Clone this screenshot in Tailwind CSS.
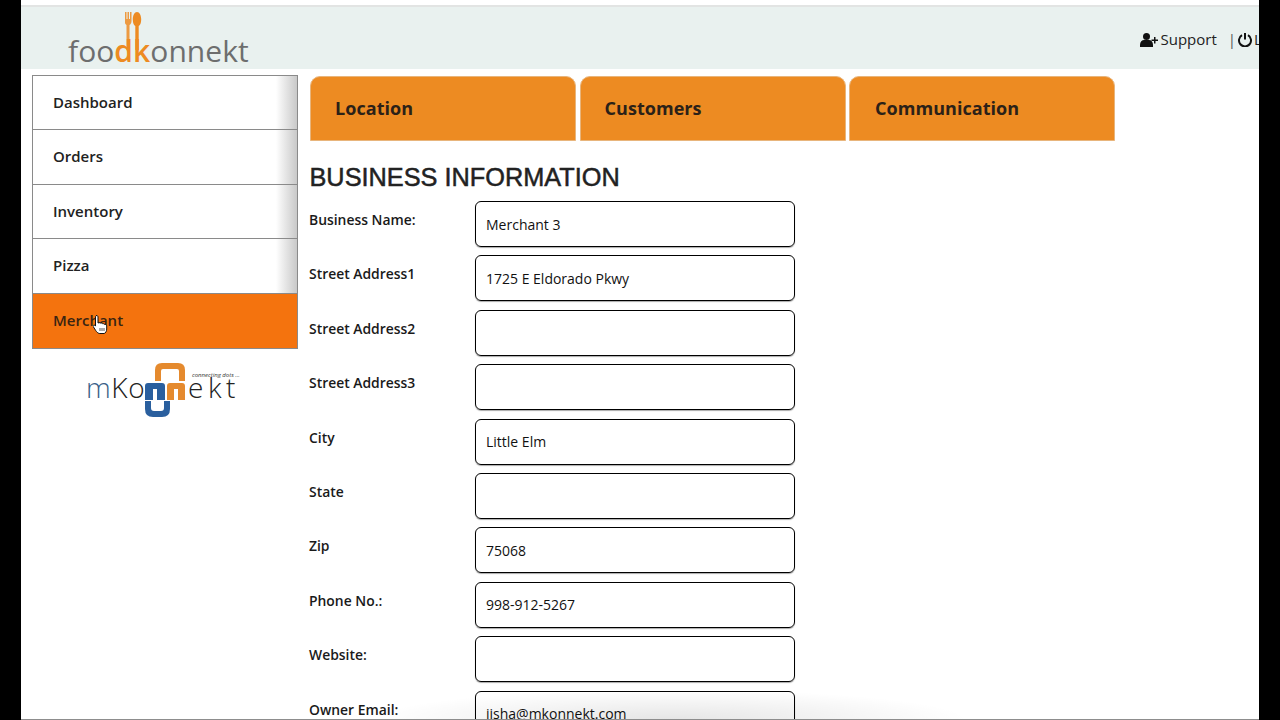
<!DOCTYPE html>
<html lang="en">
<head>
  <meta charset="UTF-8" />
  <title>foodkonnekt - Merchant</title>
  <script src="https://cdn.jsdelivr.net/npm/@tailwindcss/browser@4"></script>
</head>
<body class="bg-black font-['Open_Sans',sans-serif] text-[#111]">
<div class="relative ml-[21px] h-[720px] w-[1238px] overflow-hidden bg-white">

  <!-- header -->
  <div class="h-[7px] border-b-2 border-[#e2e4e3] bg-white"></div>
  <header class="flex h-[62px] items-start justify-between bg-[#e9f1ef]">
    <div class="relative ml-[46px] h-[62px] w-[190px]">
      <svg class="absolute left-[58px] top-[5px]" width="18" height="38" viewBox="0 0 18 38">
        <path d="M0 0h1.500v7h1v-7h1.500v7h1v-7h1.500v9c0 2-1 3.500-2 4v25h-3v-25c-1-.5-2-2-2-4z" fill="#ed8b22" opacity=".85"/>
        <path d="M12 0c2.500 0 4.200 3.500 4.200 7.500 0 3.500-1.200 6-2.500 6.500v24h-3.400v-24c-1.300-.5-2.500-3-2.500-6.500 0-4 1.700-7.500 4.200-7.500z" fill="#ed8b22"/>
      </svg>
      <div class="absolute left-[1px] top-[24px] text-[30px] leading-[40px] tracking-[.05px] text-[#6d6e6e]">foo<span class="font-semibold text-[#ed8b22]">dk</span>onnekt</div>
    </div>
    <div class="flex items-center pt-[22px] text-[15px] leading-[20px] text-[#222]">
      <svg class="mr-[2px] mt-[1px]" width="18" height="14" viewBox="0 0 18 14" fill="#111">
        <circle cx="6.500" cy="3.500" r="3.500"/>
        <path d="M0 14v-2.500c0-2.500 2-4.500 4-4.500h5c2 0 4 2 4 4.500v2.500z"/>
        <path d="M14 4h1.500v2.500h2.500v1.500h-2.500v2.500h-1.500v-2.500h-2.500v-1.500h2.500z"/>
      </svg>
      <span>Support</span>
      <span class="ml-[11px] text-[#555]">|</span>
      <svg class="ml-[2px] mr-[2px]" width="14" height="15" viewBox="0 0 14 15" fill="none" stroke="#111" stroke-width="2">
        <path d="M4 3.200a6 6 0 1 0 6 0"/>
        <path d="M7 1v6.500"/>
      </svg>
      <span class="w-[5px] overflow-hidden">Logout</span>
    </div>
  </header>

  <div class="flex items-start pl-[11px] pt-[6px]">
    <!-- sidebar -->
    <aside class="w-[266px] shrink-0">
      <nav class="flex flex-col border border-[#8a8a8a] bg-white text-[15px] font-semibold text-[#222]">
        <a class="flex h-[54px] items-center border-b border-[#8a8a8a] bg-gradient-to-r from-white from-[92%] to-[#c9c9c9] pb-[1px] pl-[20px]">Dashboard</a>
        <a class="flex h-[54.500px] items-center border-b border-[#8a8a8a] bg-gradient-to-r from-white from-[92%] to-[#c9c9c9] pb-[1px] pl-[20px]">Orders</a>
        <a class="flex h-[54.500px] items-center border-b border-[#8a8a8a] bg-gradient-to-r from-white from-[92%] to-[#c9c9c9] pb-[1px] pl-[20px]">Inventory</a>
        <a class="flex h-[54.500px] items-center border-b border-[#8a8a8a] bg-gradient-to-r from-white from-[92%] to-[#c9c9c9] pb-[1px] pl-[20px]">Pizza</a>
        <a class="relative flex h-[54px] items-center bg-[#f4730e] pb-[1px] pl-[20px] text-[#3a2412]">
          Merchant
          <svg class="absolute left-[60px] top-[20px]" width="16" height="20" viewBox="0 0 16 20">
            <path d="M3.500 1.500c1 0 1.500.7 1.500 1.500v6l1-.3c.8-.2 1.500 0 1.800.5.800-.3 1.600 0 1.900.6.800-.3 1.700 0 2 .7.900-.2 2 .4 2 1.500v3c0 2-1 4-2.500 4.500h-5c-1.500-.5-2.500-1.500-3.500-3l-2.500-4c-.5-1 1-2 1.800-1l.5.600v-9.100c0-.8.500-1.500 1.500-1.500z" fill="#fff" stroke="#111" stroke-width="1"/>
            <path d="M7 14v3M9 14v3M11 14v3" stroke="#555" stroke-width="1"/>
          </svg>
        </a>
      </nav>

      <!-- mkonnekt logo -->
      <div class="relative mt-[13px] h-[58px] w-[266px]">
        <svg class="absolute left-[113px] top-0" width="42" height="56" viewBox="0 0 42 56">
          <path d="M10 19v-11q0-7 7-7h16q7 0 7 7v11h-6v-10q0-2-2-2h-14q-2 0-2 2v10z" fill="#e58a2e"/>
          <path d="M0 38v-14q0-3 3-3h14q3 0 3 3v14h-8v-11h-4v11z" fill="#2a5f9e"/>
          <path d="M22 38v-14q0-3 3-3h12q3 0 3 3v14h-7v-11h-4v11z" fill="#e58a2e"/>
          <path d="M0 39h6v7q0 3 3 3h7q3 0 3-3v-7h6v8q0 8-8 8h-9q-8 0-8-8z" fill="#2a5f9e"/>
        </svg>
        <div class="absolute left-[54px] top-[5px] text-[28px] font-light leading-[40px] tracking-[.6px] text-[#222]"><span class="text-[#3a5f88]">m</span>Ko</div>
        <div class="absolute left-[156px] top-[5px] text-[28px] font-light leading-[40px] tracking-[4.500px] text-[#222]">ekt</div>
        <div class="absolute left-[160px] top-[9px] text-[6px] italic leading-[8px] text-[#333]">connecting dots ...</div>
      </div>
    </aside>

    <!-- main -->
    <main class="ml-[11px] w-[830px]">
      <div class="flex gap-[3.500px] pl-[1px] pt-[1px]">
        <div class="flex h-[65px] w-[266px] items-center rounded-t-[10px] border border-[#e8b57c] bg-[#ed8b22] pl-[24px] text-[18px] font-bold tracking-[.05px] text-[#2b2118]">Location</div>
        <div class="flex h-[65px] w-[266px] items-center rounded-t-[10px] border border-[#e8b57c] bg-[#ed8b22] pl-[24px] text-[18px] font-bold tracking-[.05px] text-[#2b2118]">Customers</div>
        <div class="flex h-[65px] w-[266px] items-center rounded-t-[10px] border border-[#e8b57c] bg-[#ed8b22] pl-[25px] text-[18px] font-bold tracking-[.05px] text-[#2b2118]">Communication</div>
      </div>

      <h1 class="mt-[20px] pl-[.5px] font-['Liberation_Sans',sans-serif] text-[25.300px] font-normal leading-[32px] text-[#222] [-webkit-text-stroke:0.5px_#222]">BUSINESS INFORMATION</h1>

      <form class="mt-[8px] flex flex-col gap-[8.400px] text-[14px]">
        <div class="flex h-[46px]"><label class="w-[166px] pt-[9px] text-[13.900px] font-semibold text-[#1a1a1a]">Business Name:</label><div class="flex h-[46px] w-[320px] items-center rounded-[6px] border border-black pl-[10px] shadow-[0_1px_1px_#aaa]">Merchant 3</div></div>
        <div class="flex h-[46px]"><label class="w-[166px] pt-[9px] text-[13.900px] font-semibold text-[#1a1a1a]">Street Address1</label><div class="flex h-[46px] w-[320px] items-center rounded-[6px] border border-black pl-[10px] shadow-[0_1px_1px_#aaa]">1725 E Eldorado Pkwy</div></div>
        <div class="flex h-[46px]"><label class="w-[166px] pt-[9px] text-[13.900px] font-semibold text-[#1a1a1a]">Street Address2</label><div class="flex h-[46px] w-[320px] items-center rounded-[6px] border border-black pl-[10px] shadow-[0_1px_1px_#aaa]"></div></div>
        <div class="flex h-[46px]"><label class="w-[166px] pt-[9px] text-[13.900px] font-semibold text-[#1a1a1a]">Street Address3</label><div class="flex h-[46px] w-[320px] items-center rounded-[6px] border border-black pl-[10px] shadow-[0_1px_1px_#aaa]"></div></div>
        <div class="flex h-[46px]"><label class="w-[166px] pt-[9px] text-[13.900px] font-semibold text-[#1a1a1a]">City</label><div class="flex h-[46px] w-[320px] items-center rounded-[6px] border border-black pl-[10px] shadow-[0_1px_1px_#aaa]">Little Elm</div></div>
        <div class="flex h-[46px]"><label class="w-[166px] pt-[9px] text-[13.900px] font-semibold text-[#1a1a1a]">State</label><div class="flex h-[46px] w-[320px] items-center rounded-[6px] border border-black pl-[10px] shadow-[0_1px_1px_#aaa]"></div></div>
        <div class="flex h-[46px]"><label class="w-[166px] pt-[9px] text-[13.900px] font-semibold text-[#1a1a1a]">Zip</label><div class="flex h-[46px] w-[320px] items-center rounded-[6px] border border-black pl-[10px] shadow-[0_1px_1px_#aaa]">75068</div></div>
        <div class="flex h-[46px]"><label class="w-[166px] pt-[9px] text-[13.900px] font-semibold text-[#1a1a1a]">Phone No.:</label><div class="flex h-[46px] w-[320px] items-center rounded-[6px] border border-black pl-[10px] shadow-[0_1px_1px_#aaa]">998-912-5267</div></div>
        <div class="flex h-[46px]"><label class="w-[166px] pt-[9px] text-[13.900px] font-semibold text-[#1a1a1a]">Website:</label><div class="flex h-[46px] w-[320px] items-center rounded-[6px] border border-black pl-[10px] shadow-[0_1px_1px_#aaa]"></div></div>
        <div class="flex h-[46px]"><label class="w-[166px] pt-[9px] text-[13.900px] font-semibold text-[#1a1a1a]">Owner Email:</label><div class="flex h-[46px] w-[320px] items-center rounded-[6px] border border-black pl-[10px] shadow-[0_1px_1px_#aaa]">jisha@mkonnekt.com</div></div>
      </form>
    </main>
  </div>

  <!-- video player fade along the bottom edge -->
  <div class="pointer-events-none absolute bottom-0 left-[340px] h-[32px] w-[620px] bg-[radial-gradient(ellipse_at_bottom,rgba(0,0,0,.1),rgba(0,0,0,0)_68%)]"></div>
  <div class="pointer-events-none absolute bottom-0 left-0 h-px w-full bg-[#8d8d8d]"></div>
</div>
</body>
</html>
